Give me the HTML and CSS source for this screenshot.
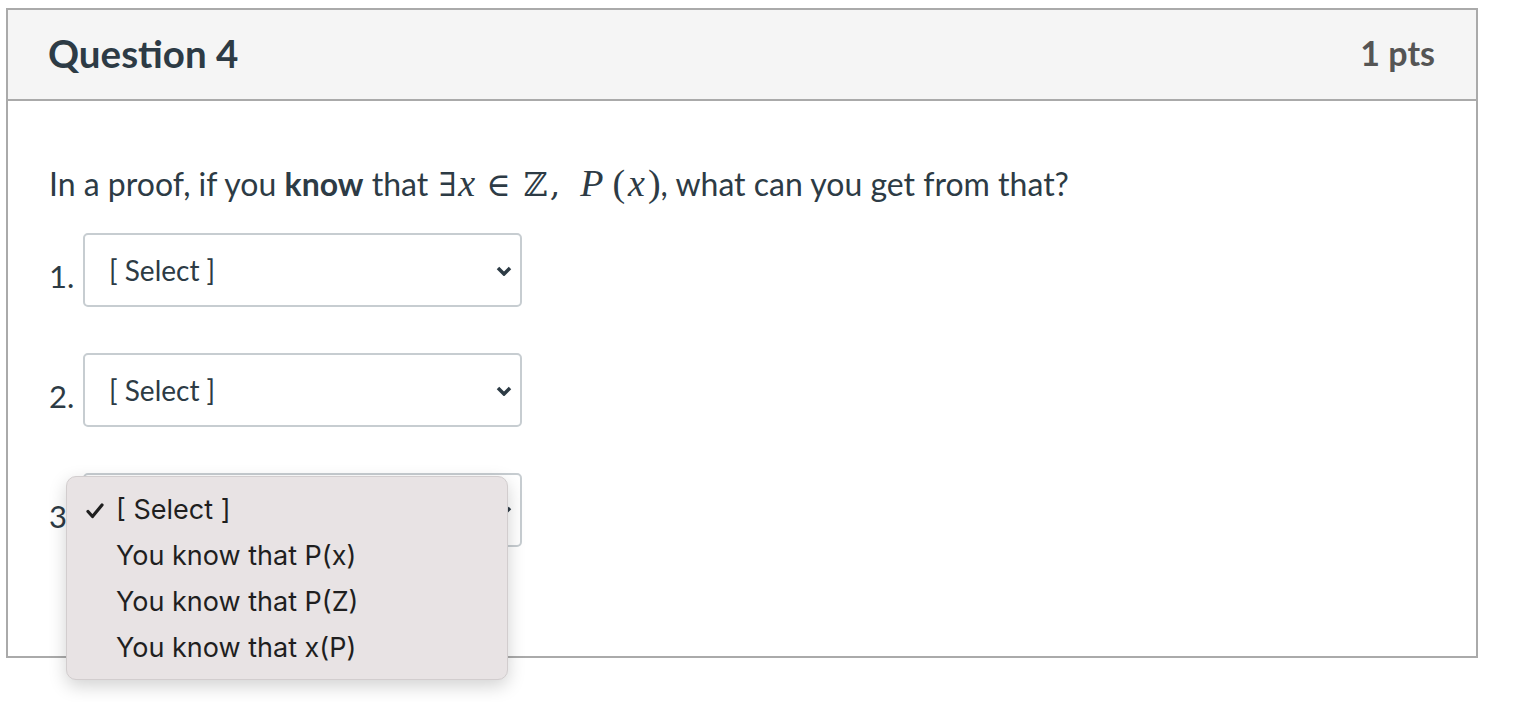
FILE: index.html
```html
<!DOCTYPE html>
<html lang="en">
<head>
    <meta charset="UTF-8">
    <meta name="viewport" content="width=device-width, initial-scale=1.0">
    <title>Question 4</title>
    <link rel="stylesheet" href="styles.css">
</head>
<body>
    <div class="question">
        <div class="question-header">
            <h2 class="question-title">Question 4</h2>
            <span class="points">1 pts</span>
        </div>
        <div class="question-body">
            <p class="question-text">
                In a proof, if you <strong>know</strong> that
                <span class="math"><span class="op">∃</span><i>x</i><span class="op rel">∈</span><span class="op">ℤ</span>,<span class="sp"></span><i>P</i><span class="paren">(</span><i>x</i><span class="paren">)</span></span>, what can you get from that?
            </p>

            <div class="answer-row">
                <span class="answer-num">1.</span>
                <div class="select-box">
                    <span>[ Select ]</span>
                    <svg class="chevron" viewBox="0 0 16 10" width="16" height="10"><path d="M2 2 L8 8 L14 2" fill="none" stroke="#2d3b45" stroke-width="3.5"/></svg>
                </div>
            </div>
            <div class="answer-row">
                <span class="answer-num">2.</span>
                <div class="select-box">
                    <span>[ Select ]</span>
                    <svg class="chevron" viewBox="0 0 16 10" width="16" height="10"><path d="M2 2 L8 8 L14 2" fill="none" stroke="#2d3b45" stroke-width="3.5"/></svg>
                </div>
            </div>
            <div class="answer-row">
                <span class="answer-num">3.</span>
                <div class="select-box">
                    <span>[ Select ]</span>
                    <svg class="chevron" viewBox="0 0 16 10" width="16" height="10"><path d="M2 2 L8 8 L14 2" fill="none" stroke="#2d3b45" stroke-width="3.5"/></svg>
                    <ul class="dropdown">
                        <li class="selected">
                            <svg class="check" viewBox="0 0 18 16" width="18" height="16"><path d="M2 8.5 L6.5 13.5 L16 2" fill="none" stroke="#1f1f1f" stroke-width="3.2" stroke-linecap="round" stroke-linejoin="round"/></svg>[ Select ]
                        </li>
                        <li>You know that P(x)</li>
                        <li>You know that P(Z)</li>
                        <li>You know that x(P)</li>
                    </ul>
                </div>
            </div>
        </div>
    </div>
</body>
</html>
```

FILE: styles.css
```css
html, body {
    min-height: 702px;
}
body {
    margin: 0;
    background: #fff;
    font-family: Lato, "Open Sans", sans-serif;
    color: #2d3b45;
}
.question {
    margin: 8px 0 0 6px;
    width: 1468px;
    height: 646px;
    border: 2px solid #aaaaaa;
}
.question-header {
    display: flex;
    justify-content: space-between;
    align-items: center;
    box-sizing: border-box;
    height: 91px;
    padding: 0 41px 4px 40px;
    background: #f5f5f5;
    border-bottom: 2px solid #aaaaaa;
}
.question-title {
    margin: 0;
    font-size: 38.5px;
    font-weight: 700;
    color: #2d3b45;
}
.points {
    font-size: 34px;
    font-weight: 700;
    color: #555;
}
.question-body {
    padding: 62px 41px 0;
}
.question-text {
    margin: 0 0 28px;
    font-size: 32px;
    line-height: 40px;
}
.question-text strong {
    font-weight: 700;
}
.math {
    font-family: "DejaVu Serif", "Liberation Serif", serif;
    font-size: 33px;
}
.math i {
    font-family: "Liberation Serif", serif;
    font-size: 38px;
    font-style: italic;
}
.math .op {
    margin: 0 2px;
}
.math .rel {
    margin: 0 11px;
}
.math .sp {
    display: inline-block;
    width: 20px;
}
.math .paren {
    font-family: "Liberation Serif", serif;
    font-size: 38px;
    margin: 0 3px 0 9px;
}
.math .paren + i + .paren {
    margin: 0 0 0 3px;
}
.answer-row {
    display: flex;
    align-items: flex-end;
    margin-bottom: 46px;
}
.answer-num {
    width: 34px;
    font-size: 31px;
    line-height: 36px;
    margin-bottom: 13px;
}
.select-box {
    position: relative;
    display: flex;
    align-items: center;
    justify-content: space-between;
    box-sizing: border-box;
    width: 439px;
    height: 74px;
    padding: 0 8px 0 24px;
    border: 2px solid #c7cdd1;
    border-radius: 5px;
    font-size: 28px;
}
.chevron {
    margin-top: 2px;
}
.dropdown {
    position: absolute;
    left: -19px;
    top: 1px;
    z-index: 2;
    box-sizing: border-box;
    width: 442px;
    height: 204px;
    margin: 0;
    padding: 10px 0 0 0;
    list-style: none;
    background: #e8e3e4;
    border: 1px solid #d2cdce;
    border-radius: 10px;
    box-shadow: 0 6px 18px rgba(0, 0, 0, 0.18);
    font-family: Inter, "Liberation Sans", sans-serif;
    font-size: 27px;
    color: #1f1f1f;
}
.dropdown li {
    position: relative;
    height: 46px;
    line-height: 46px;
    padding-left: 49px;
}
.check {
    position: absolute;
    left: 19px;
    top: 16px;
}
```
